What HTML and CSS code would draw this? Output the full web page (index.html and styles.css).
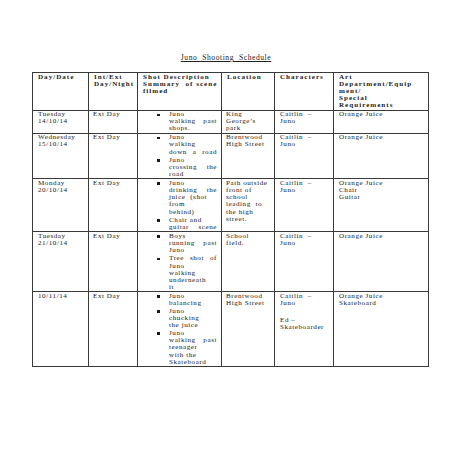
FILE: index.html
```html
<!DOCTYPE html>
<html lang="en">
<head>
<meta charset="utf-8">
<title>Juno Shooting Schedule</title>
<link rel="stylesheet" href="styles.css">
</head>
<body>
<div class="page">
  <h1 class="title">Juno&nbsp; Shooting&nbsp; Schedule</h1>
  <table class="sched">
    <colgroup>
      <col class="c1"><col class="c2"><col class="c3"><col class="c4"><col class="c5"><col class="c6">
    </colgroup>
    <thead>
      <tr class="r0">
        <th>Day/Date</th>
        <th>Int/Ext<br>Day/Night</th>
        <th>Shot Description<br>Summary&nbsp; of scene<br>filmed</th>
        <th>Location</th>
        <th>Characters</th>
        <th>Art<br>Department/Equip<br>ment/<br>Special<br>Requirements</th>
      </tr>
    </thead>
    <tbody>
      <tr class="r1">
        <td>Tuesday<br>14/10/14</td>
        <td>Ext Day</td>
        <td class="shots"><ul>
          <li><span class="txt"><span class="ln">Juno</span><span class="ln j">walking past</span><span class="ln">shops.</span></span></li>
        </ul></td>
        <td>King<br>George’s<br>park</td>
        <td>Caitlin&nbsp; –<br>Juno</td>
        <td>Orange Juice</td>
      </tr>
      <tr class="r2">
        <td>Wednesday<br>15/10/14</td>
        <td>Ext Day</td>
        <td class="shots"><ul>
          <li><span class="txt"><span class="ln">Juno</span><span class="ln">walking</span><span class="ln j">down a road</span></span></li>
          <li><span class="txt"><span class="ln">Juno</span><span class="ln j">crossing the</span><span class="ln">road</span></span></li>
        </ul></td>
        <td>Brentwood<br>High Street</td>
        <td>Caitlin&nbsp; –<br>Juno</td>
        <td>Orange Juice</td>
      </tr>
      <tr class="r3">
        <td>Monday<br>20/10/14</td>
        <td>Ext Day</td>
        <td class="shots"><ul>
          <li><span class="txt"><span class="ln">Juno</span><span class="ln j">drinking the</span><span class="ln">juice&nbsp; (shot</span><span class="ln">from</span><span class="ln">behind)</span></span></li>
          <li><span class="txt"><span class="ln">Chair and</span><span class="ln j">guitar scene</span></span></li>
        </ul></td>
        <td>Path outside<br>front of<br>school<br>leading&nbsp; to<br>the high<br>street.</td>
        <td>Caitlin&nbsp; –<br>Juno</td>
        <td>Orange Juice<br>Chair<br>Guitar</td>
      </tr>
      <tr class="r4">
        <td>Tuesday<br>21/10/14</td>
        <td>Ext Day</td>
        <td class="shots"><ul>
          <li><span class="txt"><span class="ln">Boys</span><span class="ln j">running past</span><span class="ln">Juno</span></span></li>
          <li><span class="txt"><span class="ln j">Tree shot of</span><span class="ln">Juno</span><span class="ln">walking</span><span class="ln">underneath</span><span class="ln">it</span></span></li>
        </ul></td>
        <td>School<br>field.</td>
        <td>Caitlin&nbsp; –<br>Juno</td>
        <td>Orange Juice</td>
      </tr>
      <tr class="r5">
        <td>10/11/14</td>
        <td>Ext Day</td>
        <td class="shots"><ul class="tight">
          <li><span class="txt"><span class="ln">Juno</span><span class="ln">balancing</span></span></li>
          <li><span class="txt"><span class="ln">Juno</span><span class="ln">chucking</span><span class="ln">the juice</span></span></li>
          <li><span class="txt"><span class="ln">Juno</span><span class="ln j">walking past</span><span class="ln">teenager</span><span class="ln">with the</span><span class="ln">Skateboard</span></span></li>
        </ul></td>
        <td>Brentwood<br>High Street</td>
        <td>Caitlin&nbsp; –<br>Juno<br><span class="blank"></span><br>Ed –<br>Skateboarder</td>
        <td>Orange Juice<br>Skateboard</td>
      </tr>
    </tbody>
  </table>
</div>
</body>
</html>
```

FILE: styles.css
```css
html, body {
  margin: 0;
  padding: 0;
  background: #ffffff;
}

body {
  font-family: "Liberation Serif", "Times New Roman", serif;
  color: #222222;
  width: 453px;
  height: 453px;
  overflow: hidden;
}

.page {
  padding: 53px 0 0 32px;
}

.title {
  margin: 0 0 9px 0;
  width: 395px;
  padding-right: 7px;
  box-sizing: border-box;
  text-align: center;
  font-size: 7.6px;
  font-weight: normal;
  line-height: 10px;
  letter-spacing: 0.55px;
  text-decoration: underline;
  text-underline-offset: 1px;
}

.sched {
  border-collapse: collapse;
  table-layout: fixed;
  width: 396px;
  font-size: 7.1px;
  line-height: 7.2px;
}

.c1 { width: 56px; }
.c2 { width: 49px; }
.c3 { width: 84px; }
.c4 { width: 53px; }
.c5 { width: 59px; }
.c6 { width: 95px; }

.sched th,
.sched td {
  border: 1px solid #3a3a3a;
  vertical-align: top;
  text-align: left;
  padding: 0.5px 1px 0 5px;
  white-space: nowrap;
  overflow: hidden;
}

.sched th {
  font-weight: bold;
  letter-spacing: 1px;
}

.sched td {
  letter-spacing: 0.55px;
}

.sched td:nth-child(2),
.sched td:nth-child(4) {
  padding-left: 4px;
}

.r0 { height: 36px; }
.r1 { height: 22px; }
.r2 { height: 45px; }
.r3 { height: 53px; }
.r4 { height: 60px; }
.r5 { height: 75px; }

.sched td.shots {
  padding: 0;
}

.shots ul {
  list-style: none;
  margin: 0;
  padding: 0.5px 0 0 0;
  display: flex;
  flex-direction: column;
  gap: 1px;
}

.shots ul.tight {
  gap: 0.5px;
}

.shots li {
  display: flex;
  align-items: flex-start;
}

.shots li::before {
  content: "";
  flex: none;
  width: 2.5px;
  height: 2.5px;
  margin: 2.5px 9.5px 0 19px;
  background: #1a1a1a;
}

.txt {
  display: block;
  width: 48px;
}

.ln {
  display: block;
}

.ln.j {
  text-align: justify;
  text-align-last: justify;
}

.blank {
  display: inline-block;
  height: 7.2px;
}
```
